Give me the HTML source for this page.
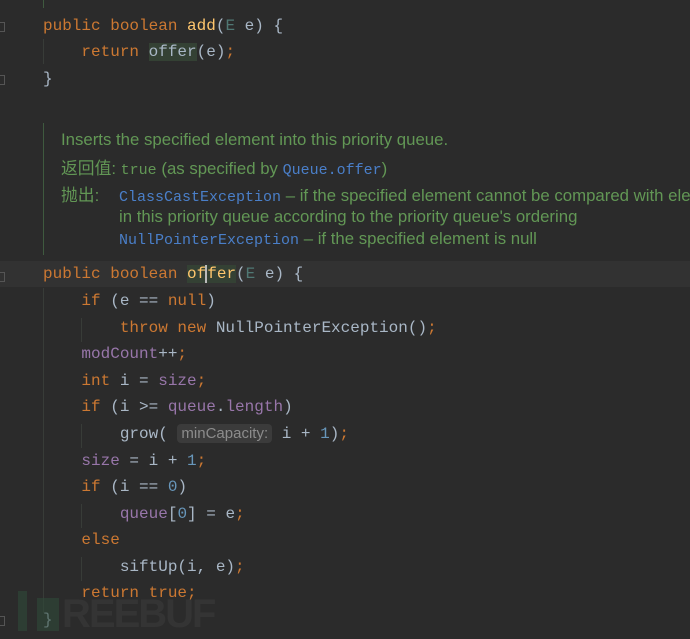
<!DOCTYPE html>
<html><head><style>
body{margin:0;width:690px;height:639px;background:#2b2b2b;overflow:hidden;position:relative;font-family:"Liberation Mono",monospace;font-size:16px;color:#a9b7c6}
.l{position:absolute;left:43px;white-space:pre;line-height:20px}
.k{color:#cc7832}.f{color:#ffc66d}.p{color:#9876aa}.n{color:#6897bb}.t{color:#507874}
.hl{background:#344134}
.doc{position:absolute;left:61px;font-family:"Liberation Sans","Noto Sans CJK SC",sans-serif;font-size:16.8px;color:#629755;white-space:pre;line-height:20px}
.dm{font-family:"Liberation Mono",monospace;font-size:15px;letter-spacing:0}
.db{color:#4a7fc9}
.g{position:absolute;width:1px;background:#383c38}
.hint{background:#3b3b3b;color:#8c8c8c;font-family:"Liberation Sans",sans-serif;font-size:15px;border-radius:4px;padding:1px 4px}
.fold{position:absolute;left:0;width:4px;height:8px;border:1px solid #555;border-left:none}
</style></head><body>
<div style="position:absolute;left:0;top:261px;width:690px;height:26px;background:#323232"></div>
<div class="g" style="left:43px;top:0;height:8px;background:#3f5a3f"></div>
<div class="g" style="left:43px;top:123px;height:132px;background:#3f5a3f"></div>
<div class="g" style="left:43px;top:39px;height:25px"></div>
<div class="g" style="left:43px;top:288px;height:325px"></div>
<div class="g" style="left:81px;top:318px;height:24px"></div>
<div class="g" style="left:81px;top:424px;height:24px"></div>
<div class="g" style="left:81px;top:504px;height:24px"></div>
<div class="g" style="left:81px;top:557px;height:24px"></div>
<div class="fold" style="top:22px"></div><div class="fold" style="top:75px"></div><div class="fold" style="top:272px"></div><div class="fold" style="top:616px"></div>

<div class="l" style="top:16px"><span class="k">public boolean </span><span class="f">add</span>(<span class="t">E</span> e) {</div>
<div class="l" style="top:42px">    <span class="k">return </span><span class="hl">offer</span>(e)<span class="k">;</span></div>
<div class="l" style="top:69px">}</div>

<div class="doc" style="top:130px">Inserts the specified element into this priority queue.</div>
<div class="doc" style="top:159px">返回值: <span class="dm">true</span> (as specified by <span class="dm db">Queue.offer</span>)</div>
<div class="doc" style="top:186px">抛出:</div>
<div class="doc" style="top:186px;left:119px"><span class="dm db">ClassCastException</span> – if the specified element cannot be compared with ele</div>
<div class="doc" style="top:207px;left:119px">in this priority queue according to the priority queue's ordering</div>
<div class="doc" style="top:229px;left:119px"><span class="dm db">NullPointerException</span> – if the specified element is null</div>

<div class="l" style="top:264px"><span class="k">public boolean </span><span class="hl"><span class="f">of</span><span style="border-left:2px solid #bbb;margin-left:-1px"></span><span class="f">fer</span></span>(<span class="t">E</span> e) {</div>
<div class="l" style="top:291px">    <span class="k">if </span>(e == <span class="k">null</span>)</div>
<div class="l" style="top:318px">        <span class="k">throw new </span>NullPointerException()<span class="k">;</span></div>
<div class="l" style="top:344px">    <span class="p">modCount</span>++<span class="k">;</span></div>
<div class="l" style="top:371px">    <span class="k">int </span>i = <span class="p">size</span><span class="k">;</span></div>
<div class="l" style="top:397px">    <span class="k">if </span>(i &gt;= <span class="p">queue</span>.<span class="p">length</span>)</div>
<div class="l" style="top:424px">        grow( <span class="hint">minCapacity:</span> i + <span class="n">1</span>)<span class="k">;</span></div>
<div class="l" style="top:451px">    <span class="p">size</span> = i + <span class="n">1</span><span class="k">;</span></div>
<div class="l" style="top:477px">    <span class="k">if </span>(i == <span class="n">0</span>)</div>
<div class="l" style="top:504px">        <span class="p">queue</span>[<span class="n">0</span>] = e<span class="k">;</span></div>
<div class="l" style="top:530px">    <span class="k">else</span></div>
<div class="l" style="top:557px">        siftUp(i, e)<span class="k">;</span></div>
<div class="l" style="top:583px">    <span class="k">return true;</span></div>
<div class="l" style="top:610px">}</div>
<div style="position:absolute;left:18px;top:591px;width:9px;height:40px;background:#2f4a38;opacity:.6"></div>
<div style="position:absolute;left:37px;top:598px;width:22px;height:33px;background:#2f4a38;opacity:.6"></div>
<div style="position:absolute;left:62px;top:596px;font-family:'Liberation Sans',sans-serif;font-weight:bold;font-size:40px;color:#343434;letter-spacing:-2px;line-height:36px">REEBUF</div>
</body></html>
